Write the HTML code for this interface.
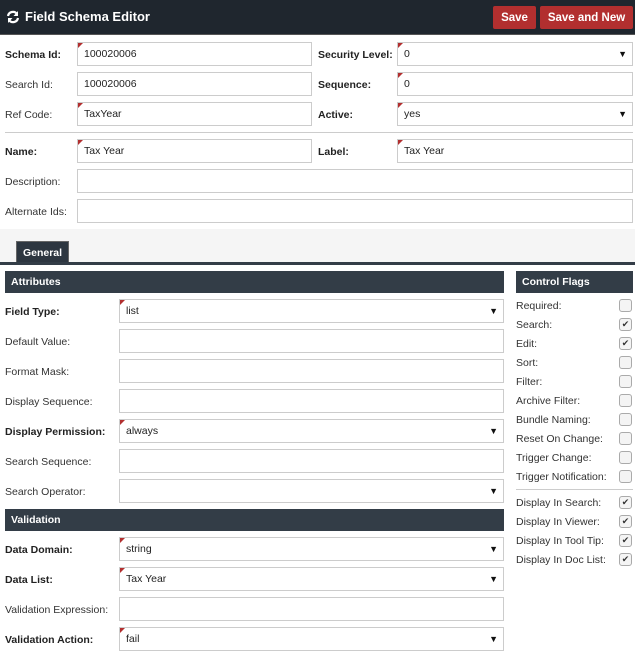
<!DOCTYPE html><html><head><style>
*{box-sizing:border-box;margin:0;padding:0}
body{width:635px;height:648px;overflow:hidden;background:#fff;font-family:"Liberation Sans",sans-serif;font-size:10.5px;color:#333;position:relative}
.a{position:absolute}
.hdr{left:0;top:0;width:635px;height:35px;background:#1f262e;border-bottom:1px solid #555}
.btn{background:#b22f2f;color:#fff;font-weight:bold;font-size:11.5px;top:6px;height:23px;padding-top:5px;line-height:14px;text-align:center;border-radius:2px}
.l{line-height:14px;top:0}
.b{font-weight:bold;color:#222}
.in{border:1px solid #ccc;height:24px;padding-top:5px;line-height:13px;padding-left:6px;background:#fff;color:#222}
.r:before{content:"";position:absolute;left:0;top:0;border-top:5px solid #b22f2f;border-right:5px solid transparent}
.s:after{content:"▼";position:absolute;right:5px;top:5px;font-size:9px;color:#111}
.sec{background:#333d47;color:#fff;font-weight:bold;height:22px;line-height:22px;padding-left:6px}
.cb{width:13px;height:13px;border:1px solid #aaa;border-radius:3px;background:#f4f4f4;font-size:9px;line-height:11px;text-align:center;color:#333}
</style></head><body>
<div class="a hdr"></div>
<svg class="a" style="left:6px;top:10px" width="14" height="14" viewBox="0 0 14 14"><path d="M2 6 A5 5 0 0 1 11 4" stroke="#fff" stroke-width="2.2" fill="none"/><path d="M12 1 L12 6 L7.5 6 Z" fill="#fff"/><path d="M12 8 A5 5 0 0 1 3 10" stroke="#fff" stroke-width="2.2" fill="none"/><path d="M2 13 L2 8 L6.5 8 Z" fill="#fff"/></svg>
<div class="a" style="left:25px;top:9px;color:#fff;font-weight:bold;font-size:13px">Field Schema Editor</div>
<div class="a btn" style="left:493px;width:43px">Save</div>
<div class="a btn" style="left:540px;width:93px">Save and New</div>

<div class="a l b" style="left:5px;top:48px">Schema Id:</div>
<div class="a in r" style="left:77px;top:42px;width:235px">100020006</div>
<div class="a l" style="left:5px;top:78px">Search Id:</div>
<div class="a in" style="left:77px;top:72px;width:235px">100020006</div>
<div class="a l" style="left:5px;top:108px">Ref Code:</div>
<div class="a in r" style="left:77px;top:102px;width:235px">TaxYear</div>
<div class="a l b" style="left:318px;top:48px">Security Level:</div>
<div class="a in r s" style="left:397px;top:42px;width:236px">0</div>
<div class="a l b" style="left:318px;top:78px">Sequence:</div>
<div class="a in r" style="left:397px;top:72px;width:236px">0</div>
<div class="a l b" style="left:318px;top:108px">Active:</div>
<div class="a in r s" style="left:397px;top:102px;width:236px">yes</div>
<div class="a" style="left:5px;top:132px;width:628px;height:1px;background:#ccc"></div>
<div class="a l b" style="left:5px;top:145px">Name:</div>
<div class="a in r" style="left:77px;top:139px;width:235px">Tax Year</div>
<div class="a l b" style="left:318px;top:145px">Label:</div>
<div class="a in r" style="left:397px;top:139px;width:236px">Tax Year</div>
<div class="a l" style="left:5px;top:175px">Description:</div>
<div class="a in" style="left:77px;top:169px;width:556px"></div>
<div class="a l" style="left:5px;top:205px">Alternate Ids:</div>
<div class="a in" style="left:77px;top:199px;width:556px"></div>

<div class="a" style="left:0;top:229px;width:635px;height:34px;background:#f5f5f5"></div>
<div class="a" style="left:16px;top:241px;width:53px;height:22px;background:#2d3640;color:#fff;font-weight:bold;line-height:22px;text-align:center;border:1px solid #666;border-bottom:none">General</div>
<div class="a" style="left:0;top:262px;width:635px;height:3px;background:#333d47"></div>

<div class="a sec" style="left:5px;top:271px;width:499px">Attributes</div>
<div class="a l b" style="left:5px;top:305px">Field Type:</div>
<div class="a in r s" style="left:119px;top:299px;width:385px">list</div>
<div class="a l" style="left:5px;top:335px">Default Value:</div>
<div class="a in" style="left:119px;top:329px;width:385px"></div>
<div class="a l" style="left:5px;top:365px">Format Mask:</div>
<div class="a in" style="left:119px;top:359px;width:385px"></div>
<div class="a l" style="left:5px;top:395px">Display Sequence:</div>
<div class="a in" style="left:119px;top:389px;width:385px"></div>
<div class="a l b" style="left:5px;top:425px">Display Permission:</div>
<div class="a in r s" style="left:119px;top:419px;width:385px">always</div>
<div class="a l" style="left:5px;top:455px">Search Sequence:</div>
<div class="a in" style="left:119px;top:449px;width:385px"></div>
<div class="a l" style="left:5px;top:485px">Search Operator:</div>
<div class="a in s" style="left:119px;top:479px;width:385px"></div>
<div class="a sec" style="left:5px;top:509px;width:499px">Validation</div>
<div class="a l b" style="left:5px;top:543px">Data Domain:</div>
<div class="a in r s" style="left:119px;top:537px;width:385px">string</div>
<div class="a l b" style="left:5px;top:573px">Data List:</div>
<div class="a in r s" style="left:119px;top:567px;width:385px">Tax Year</div>
<div class="a l" style="left:5px;top:603px">Validation Expression:</div>
<div class="a in" style="left:119px;top:597px;width:385px"></div>
<div class="a l b" style="left:5px;top:633px">Validation Action:</div>
<div class="a in r s" style="left:119px;top:627px;width:385px">fail</div>

<div class="a sec" style="left:516px;top:271px;width:117px">Control Flags</div>
<div class="a l" style="left:516px;top:299px">Required:</div><div class="a cb" style="left:619px;top:299px"></div>
<div class="a l" style="left:516px;top:318px">Search:</div><div class="a cb" style="left:619px;top:318px">✔</div>
<div class="a l" style="left:516px;top:337px">Edit:</div><div class="a cb" style="left:619px;top:337px">✔</div>
<div class="a l" style="left:516px;top:356px">Sort:</div><div class="a cb" style="left:619px;top:356px"></div>
<div class="a l" style="left:516px;top:375px">Filter:</div><div class="a cb" style="left:619px;top:375px"></div>
<div class="a l" style="left:516px;top:394px">Archive Filter:</div><div class="a cb" style="left:619px;top:394px"></div>
<div class="a l" style="left:516px;top:413px">Bundle Naming:</div><div class="a cb" style="left:619px;top:413px"></div>
<div class="a l" style="left:516px;top:432px">Reset On Change:</div><div class="a cb" style="left:619px;top:432px"></div>
<div class="a l" style="left:516px;top:451px">Trigger Change:</div><div class="a cb" style="left:619px;top:451px"></div>
<div class="a l" style="left:516px;top:470px">Trigger Notification:</div><div class="a cb" style="left:619px;top:470px"></div>
<div class="a" style="left:516px;top:489px;width:117px;height:1px;background:#ccc"></div>
<div class="a l" style="left:516px;top:496px">Display In Search:</div><div class="a cb" style="left:619px;top:496px">✔</div>
<div class="a l" style="left:516px;top:515px">Display In Viewer:</div><div class="a cb" style="left:619px;top:515px">✔</div>
<div class="a l" style="left:516px;top:534px">Display In Tool Tip:</div><div class="a cb" style="left:619px;top:534px">✔</div>
<div class="a l" style="left:516px;top:553px">Display In Doc List:</div><div class="a cb" style="left:619px;top:553px">✔</div>
</body></html>
